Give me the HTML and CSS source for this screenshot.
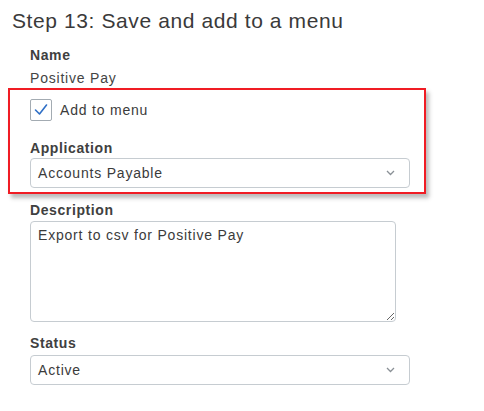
FILE: index.html
```html
<!DOCTYPE html>
<html lang="en">
<head>
<meta charset="utf-8">
<title>Step 13: Save and add to a menu</title>
<link rel="stylesheet" href="styles.css">
</head>
<body>
<div class="page">
  <h1 class="title">Step 13: Save and add to a menu</h1>
  <div class="form">
    <div class="label label-name">Name</div>
    <div class="value">Positive Pay</div>

    <div class="highlight">
      <div class="check-row">
        <span class="checkbox">
          <svg width="20" height="20" viewBox="0 0 20 20"><polyline points="4.5,10 8.5,14 15.5,5" fill="none" stroke="#2f6fc6" stroke-width="1.6" stroke-linecap="round" stroke-linejoin="round"/></svg>
        </span>
        <span class="check-text">Add to menu</span>
      </div>
      <div class="label label-app">Application</div>
      <div class="select">
        <span class="select-text">Accounts Payable</span>
        <svg class="chev" width="9" height="6" viewBox="0 0 9 6"><polyline points="1,1 4.5,4.5 8,1" fill="none" stroke="#8a9096" stroke-width="1.3"/></svg>
      </div>
    </div>

    <div class="label label-desc">Description</div>
    <textarea class="textarea">Export to csv for Positive Pay</textarea>

    <div class="label label-status">Status</div>
    <div class="select">
      <span class="select-text">Active</span>
      <svg class="chev" width="9" height="6" viewBox="0 0 9 6"><polyline points="1,1 4.5,4.5 8,1" fill="none" stroke="#8a9096" stroke-width="1.3"/></svg>
    </div>
  </div>
</div>
</body>
</html>
```
FILE: styles.css
```css
html, body {
  margin: 0;
  padding: 0;
  background: #ffffff;
}

body {
  font-family: "Liberation Sans", Arial, sans-serif;
  color: #3b3b3b;
}

.page {
  padding: 9px 0 0 12px;
}

.title {
  margin: 0;
  font-size: 21px;
  line-height: 24px;
  font-weight: normal;
  letter-spacing: 0.6px;
  color: #3a3a3a;
}

.form {
  margin-left: 18px;
  width: 380px;
  display: flex;
  flex-direction: column;
}

.label {
  font-size: 14px;
  line-height: 20px;
  font-weight: bold;
  letter-spacing: 0.6px;
  color: #404040;
}

.value {
  font-size: 14px;
  line-height: 20px;
  letter-spacing: 0.8px;
  color: #444;
  margin-top: 3px;
}

.label-name { margin-top: 12px; }

.highlight {
  margin-left: -22px;
  margin-right: -16px;
  padding: 9px 14px 4px 20px;
  border: 2px solid #f01c24;
  box-shadow: 3px 4px 4px rgba(60, 60, 60, 0.35);
  display: flex;
  flex-direction: column;
}

.check-row {
  display: flex;
  align-items: center;
  gap: 8px;
  height: 22px;
}

.checkbox {
  width: 20px;
  height: 20px;
  border: 1px solid #a3abb2;
  border-radius: 2px;
  background: #fff;
  display: flex;
}

.check-text {
  font-size: 14px;
  line-height: 22px;
  letter-spacing: 0.8px;
  color: #3b3b3b;
}

.label-app { margin-top: 17px; }

.select {
  height: 28px;
  border: 1px solid #c6ccd1;
  border-radius: 4px;
  display: flex;
  align-items: center;
  justify-content: space-between;
  padding: 0 14px 0 7px;
  background: #fff;
}

.select-text {
  font-size: 14px;
  letter-spacing: 0.8px;
  color: #3b3b3b;
}

.chev { display: block; }

.label-desc { margin-top: 6px; }

.textarea {
  margin-top: 1px;
  width: 366px;
  height: 101px;
  box-sizing: border-box;
  border: 1px solid #c6ccd1;
  border-radius: 4px;
  padding: 4px 7px;
  font-family: "Liberation Sans", Arial, sans-serif;
  font-size: 14px;
  line-height: 18px;
  letter-spacing: 0.8px;
  color: #3b3b3b;
  resize: both;
  outline: none;
}

.label-status { margin-top: 11px; margin-bottom: 2px; }
```
